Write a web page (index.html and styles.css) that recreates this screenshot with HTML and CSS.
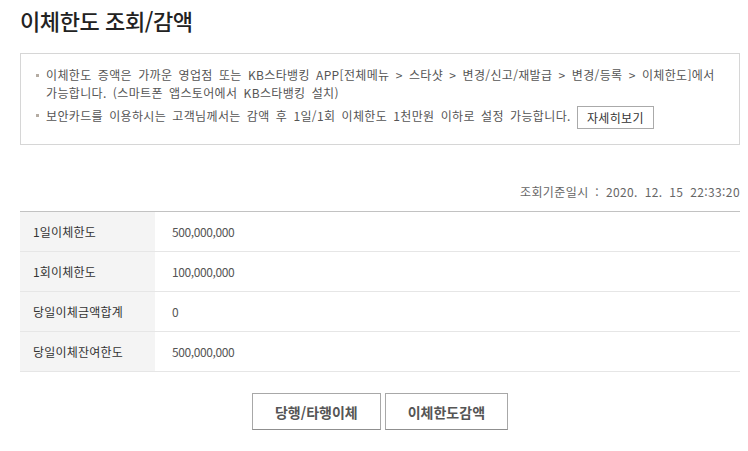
FILE: index.html
```html
<!DOCTYPE html>
<html lang="ko">
<head>
  <meta charset="UTF-8" />
  <meta name="viewport" content="width=device-width, initial-scale=1.0"/>
  <title>이체한도 조회/감액</title>
  <link rel="stylesheet" href="styles.css">
</head>
<body>
  <div class="wrap">
    <h1>이체한도 조회/감액</h1>

    <div class="notice">
      <ul>
        <li>이체한도 증액은 가까운 영업점 또는 KB스타뱅킹 APP[전체메뉴 &gt; 스타샷 &gt; 변경/신고/재발급 &gt; 변경/등록 &gt; 이체한도]에서 가능합니다. (스마트폰 앱스토어에서 KB스타뱅킹 설치)</li>
        <li>보안카드를 이용하시는 고객님께서는 감액 후 1일/1회 이체한도 1천만원 이하로 설정 가능합니다. <button class="btn-small">자세히보기</button></li>
      </ul>
    </div>

    <p class="stamp">조회기준일시 : 2020. 12. 15 22:33:20</p>

    <table class="limits">
      <tr><th>1일이체한도</th><td>500,000,000</td></tr>
      <tr><th>1회이체한도</th><td>100,000,000</td></tr>
      <tr><th>당일이체금액합계</th><td>0</td></tr>
      <tr><th>당일이체잔여한도</th><td>500,000,000</td></tr>
    </table>

    <div class="actions">
      <button class="btn">당행/타행이체</button>
      <button class="btn">이체한도감액</button>
    </div>
  </div>
</body>
</html>
```

FILE: styles.css
```css
body {
  margin: 0;
  font-family: "Noto Sans CJK KR", "Noto Sans", sans-serif;
  color: #555;
  background: #fff;
}

.wrap {
  padding: 4px 8px 20px 20px;
}

h1 {
  margin: 0;
  font-size: 22px;
  font-weight: 500;
  line-height: 32px;
  color: #222;
  letter-spacing: -0.4px;
}

.notice {
  margin-top: 17px;
  border: 1px solid #d6d6d6;
  padding: 12px 15px 15px 15px;
}

.notice ul {
  margin: 0;
  padding: 0;
  list-style: none;
}

.notice li {
  position: relative;
  padding-left: 10px;
  font-size: 12px;
  line-height: 18px;
  letter-spacing: 0.35px;
  word-spacing: 2.5px;
  color: #555;
}

.notice li + li {
  margin-top: 4px;
}

.notice li::before {
  content: "";
  position: absolute;
  left: 0;
  top: 8px;
  width: 3px;
  height: 3px;
  background: #b5aca3;
}

.btn-small {
  height: 23px;
  margin-left: 0;
  padding: 0 9px;
  border: 1px solid #aaa;
  background: #fff;
  font-family: inherit;
  font-size: 12px;
  letter-spacing: 0.35px;
  word-spacing: 0;
  color: #333;
  vertical-align: middle;
}

.stamp {
  margin: 38px 0 10px;
  text-align: right;
  font-size: 12px;
  line-height: 18px;
  letter-spacing: 0.4px;
  word-spacing: 3px;
  color: #666;
}

.limits {
  width: 100%;
  border-collapse: collapse;
  border-top: 1px solid #c2c2c2;
  font-size: 12px;
}

.limits th,
.limits td {
  height: 39px;
  border-bottom: 1px solid #e6e6e6;
  text-align: left;
  font-weight: normal;
  padding: 0;
}

.limits th {
  width: 122px;
  padding-left: 13px;
  background: #f4f4f4;
  color: #333;
  letter-spacing: 0.2px;
}

.limits td {
  padding-left: 17px;
  color: #555;
  letter-spacing: -0.4px;
}

.actions {
  display: flex;
  justify-content: center;
  gap: 4px;
  margin-top: 21px;
}

.btn {
  height: 37px;
  padding: 0 22px;
  border: 1px solid #a8a8a8;
  border-bottom-color: #8f8f8f;
  background: #fff;
  font-family: inherit;
  font-size: 14px;
  font-weight: 700;
  color: #555;
}
```
